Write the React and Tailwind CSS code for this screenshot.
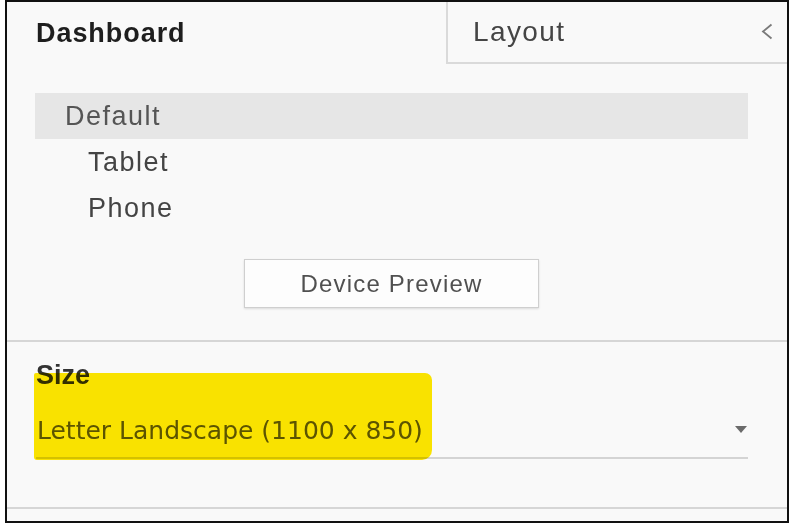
export default function App() {
  const sans = { fontFamily: '"Liberation Sans", Arial, sans-serif' };

  return (
    <div className="w-[793px] h-[530px] bg-white" style={sans}>
      <div className="relative ml-[5px] w-[784px] h-[523px] border-2 border-[#111] bg-[#f9f9f9] flex flex-col">

        {/* HEADER / TABS */}
        <div className="flex h-[62px] shrink-0">
          <div className="w-[439px] flex items-center pl-[29px]">
            <span className="text-[27px] font-bold tracking-[0.035em] text-[#1e1e1e]">
              Dashboard
            </span>
          </div>
          <div className="flex-1 flex items-center justify-between border-l-2 border-b-2 border-[#dadada] pl-[25px] pr-[13px]">
            <span className="text-[28px] tracking-[0.05em] text-[#454545]">Layout</span>
            <svg width="14" height="17" viewBox="0 0 14 17" className="mb-[1px]">
              <polyline points="11.5,1.5 3,8.5 11.5,15.5" fill="none" stroke="#7a7a7a" strokeWidth="1.8" />
            </svg>
          </div>
        </div>

        {/* DEVICE LIST */}
        <div className="mt-[29px] ml-[28px] mr-[39px] flex flex-col">
          <div className="h-[46px] bg-[#e6e6e6] flex items-center pl-[30px]">
            <span className="text-[27px] tracking-[0.055em] text-[#555]">Default</span>
          </div>
          <div className="h-[46px] flex items-center pl-[53px]">
            <span className="text-[27px] tracking-[0.055em] text-[#444]">Tablet</span>
          </div>
          <div className="h-[46px] flex items-center pl-[53px]">
            <span className="text-[27px] tracking-[0.055em] text-[#444]">Phone</span>
          </div>

          <div className="mt-[28px] flex justify-center">
            <button className="w-[295px] h-[49px] bg-[#fdfdfd] border border-[#cfcfcf] shadow-[0_1px_2px_rgba(0,0,0,0.12)] text-[24px] tracking-[0.05em] text-[#505050]">
              Device Preview
            </button>
          </div>
        </div>

        <div className="mt-[32px] h-[2px] bg-[#d6d6d6] shrink-0" />

        {/* SIZE */}
        <div className="pl-[29px] pr-[39px]">
          <div className="mt-[17px] leading-[32px] text-[27px] font-bold text-[#333]">Size</div>
          <div className="mt-[13px] h-[55px] flex items-center justify-between border-b-2 border-[#d4d4d4]">
            <span
              className="text-[25px] text-[#5c5c5c] ml-[1px]"
              style={{ fontFamily: '"DejaVu Sans", Verdana, sans-serif' }}
            >
              Letter Landscape (1100 x 850)
            </span>
            <svg width="12" height="8" viewBox="0 0 12 8" className="mr-[1px] mb-[2px]">
              <polygon points="0,0 12,0 6,7" fill="#6b6b6b" />
            </svg>
          </div>
        </div>

        <div className="mt-[48px] h-[2px] bg-[#d6d6d6] shrink-0" />

        {/* HIGHLIGHTER MARK */}
        <div className="absolute left-[27px] top-[371px] w-[398px] h-[87px] bg-[#ffe800] mix-blend-multiply rounded-tr-[7px] rounded-br-[10px] rounded-tl-[2px] rounded-bl-[3px] pointer-events-none" />
      </div>
    </div>
  );
}
